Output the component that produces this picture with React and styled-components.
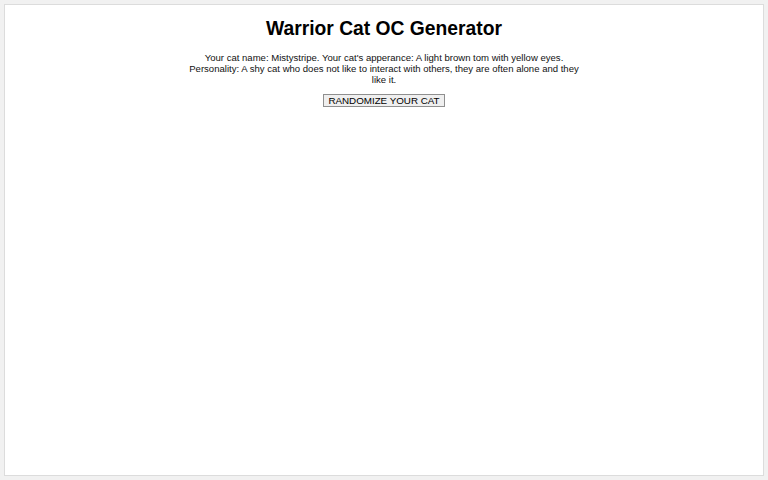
import styled, { createGlobalStyle } from "styled-components";

const GlobalStyle = createGlobalStyle`
  html, body {
    margin: 0;
    padding: 0;
    background: #f1f1f1;
  }
  body {
    font-family: "Liberation Sans", Arial, sans-serif;
  }
`;

const Page = styled.div`
  padding: 4px;
  height: 480px;
  box-sizing: border-box;
`;

const Card = styled.main`
  background: #fff;
  border: 1px solid #dcdcdc;
  height: 100%;
  box-sizing: border-box;
  display: flex;
  flex-direction: column;
  align-items: center;
  padding-top: 13px;
`;

const Title = styled.h1`
  margin: 0;
  font-size: 19.3px;
  font-weight: bold;
  color: #000;
`;

const Result = styled.p`
  margin: 12px 0 0;
  width: 392px;
  text-align: center;
  font-size: 9.55px;
  line-height: 11px;
  color: #111;
`;

const Button = styled.button`
  margin-top: 9px;
  font-family: "Liberation Sans", Arial, sans-serif;
  font-size: 9.8px;
  line-height: 11px;
  padding: 0 4px;
  background: #efefef;
  border: 1px solid #8f8f8f;
  border-radius: 0;
  color: #000;
`;

export default function App() {
  return (
    <Page>
      <GlobalStyle />
      <Card>
        <Title>Warrior Cat OC Generator</Title>
        <Result>
          Your cat name: Mistystripe. Your cat's apperance: A light brown tom
          with yellow eyes. Personality: A shy cat who does not like to
          interact with others, they are often alone and they like it.
        </Result>
        <Button>RANDOMIZE YOUR CAT</Button>
      </Card>
    </Page>
  );
}
